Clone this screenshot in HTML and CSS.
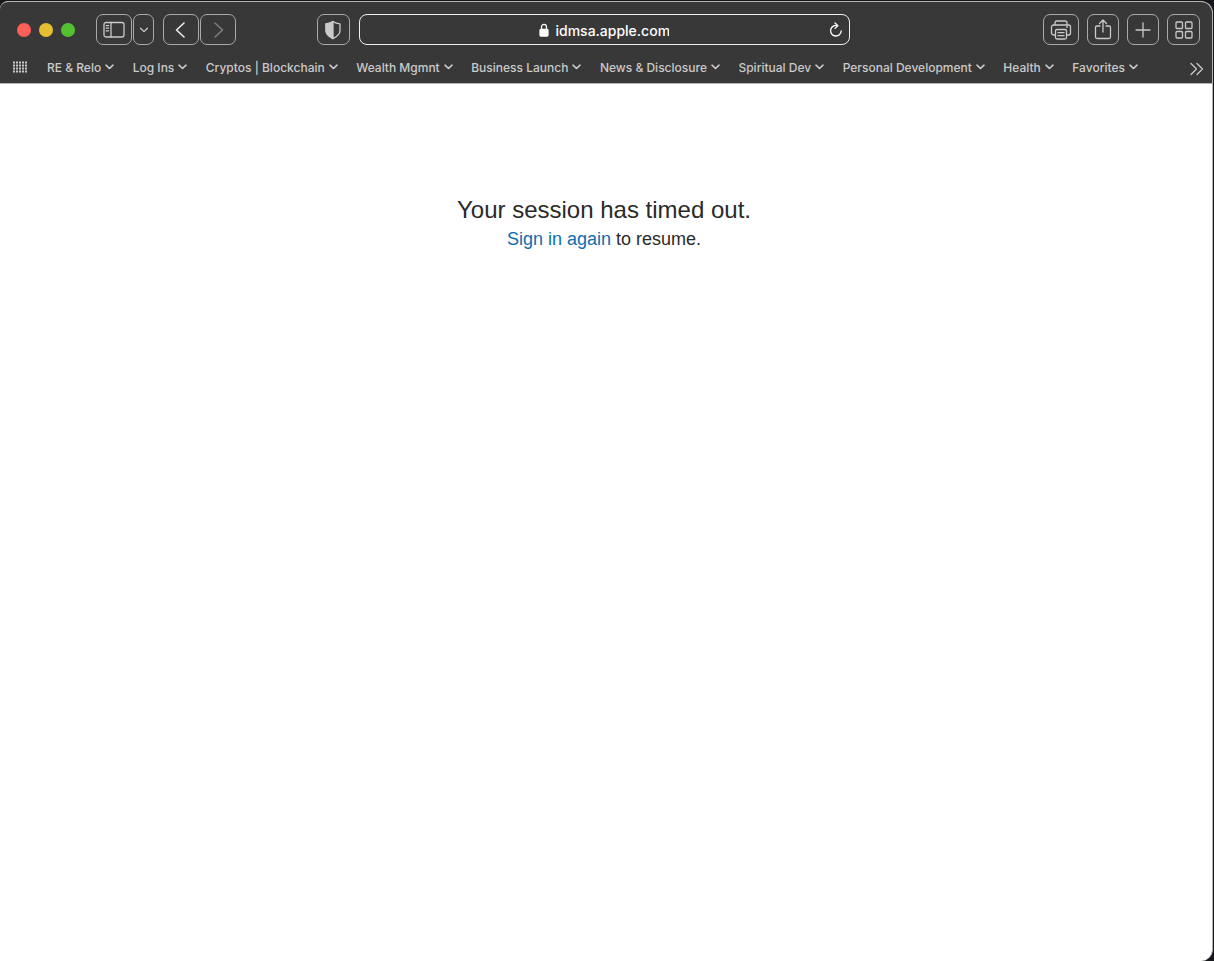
FILE: index.html
```html
<!DOCTYPE html>
<html lang="en">
<head>
  <meta charset="UTF-8">
  <meta name="viewport" content="width=device-width, initial-scale=1.0">
  <title>Session timed out</title>
  <link rel="stylesheet" href="styles.css">
</head>
<body>
  <svg class="defs" width="0" height="0" aria-hidden="true">
    <symbol id="chevron" viewBox="0 0 9 6"><path d="M1 1.200l3.500 3.300L8 1.200"/></symbol>
  </svg>

  <div class="window">
    <header class="chrome">
      <div class="toolbar">
        <div class="toolbar-left">
          <div class="lights">
            <button class="light red" aria-label="Close"></button>
            <button class="light yellow" aria-label="Minimize"></button>
            <button class="light green" aria-label="Zoom"></button>
          </div>
          <div class="pair">
            <button class="tool wide" aria-label="Show sidebar">
              <svg width="22" height="18" viewBox="0 0 22 18"><rect x="1" y="1.500" width="20" height="14.500" rx="2"/><path d="M8 1.500V16M3.200 4.600h2.400M3.200 7.200h2.400M3.200 9.800h2.400"/></svg>
            </button>
            <button class="tool slim" aria-label="Sidebar options">
              <svg width="10" height="8" viewBox="0 0 10 8"><path d="M1.500 2.200L5 5.600l3.500-3.400"/></svg>
            </button>
          </div>
          <div class="pair">
            <button class="tool wide bright" aria-label="Back">
              <svg width="12" height="18" viewBox="0 0 12 18"><path d="M9 2L1.500 9 9 16"/></svg>
            </button>
            <button class="tool wide dim" aria-label="Forward">
              <svg width="12" height="18" viewBox="0 0 12 18"><path d="M3 2l7.500 7L3 16"/></svg>
            </button>
          </div>
          <button class="tool shield" aria-label="Privacy report">
            <svg width="18" height="20" viewBox="0 0 18 20"><path d="M9 1.400c2 1.500 4.300 2.200 7 2.400v6.700c0 3.500-2.800 6-7 8.100-4.200-2.100-7-4.600-7-8.100V3.800c2.700-.2 5-.9 7-2.400z"/><path class="solid" d="M9 1.400v17.200c-4.200-2.100-7-4.600-7-8.100V3.800c2.700-.2 5-.9 7-2.400z"/></svg>
          </button>
        </div>

        <div class="address">
          <svg width="10" height="14" viewBox="0 0 10 14"><rect class="solid" x="1" y="6.500" width="8" height="6.500" rx="1"/><path d="M2.500 6.500V4a2.500 2.700 0 0 1 5 0v2.500"/></svg>
          <input type="text" value="idmsa.apple.com" aria-label="Address">
          <button class="reload" aria-label="Reload">
            <svg width="14" height="16" viewBox="0 0 14 16"><path d="M8.600 3.700A5.300 5.300 0 1 0 12.200 8.800M6 1l2.800 2.700L6 6.400"/></svg>
          </button>
        </div>

        <div class="toolbar-right">
          <button class="tool wide" aria-label="Print">
            <svg width="22" height="20" viewBox="0 0 22 20"><path d="M5 5V3a2 2 0 0 1 2-2h8a2 2 0 0 1 2 2v2M5 15H3.500A2 2 0 0 1 1.500 13V7a2 2 0 0 1 2-2h15a2 2 0 0 1 2 2v6a2 2 0 0 1-2 2H17"/><rect x="5.500" y="9.500" width="11" height="9.500" rx="1.500"/><path d="M8 12.700h6M8 15.700h6M16.500 7h1"/></svg>
          </button>
          <button class="tool" aria-label="Share">
            <svg width="18" height="22" viewBox="0 0 18 22"><path d="M6 7H3a1.500 1.500 0 0 0-1.500 1.500V18A1.500 1.500 0 0 0 3 19.500h12a1.500 1.500 0 0 0 1.500-1.500V8.500A1.500 1.500 0 0 0 15 7h-3M9 13V1M5.500 4.500L9 1l3.500 3.500"/></svg>
          </button>
          <button class="tool" aria-label="New tab">
            <svg width="16" height="16" viewBox="0 0 16 16"><path d="M8 1v14M1 8h14"/></svg>
          </button>
          <button class="tool grid" aria-label="Tab overview">
            <svg width="18" height="18" viewBox="0 0 18 18"><rect x="1" y="1" width="6.500" height="6.500" rx="1"/><rect x="10.500" y="1" width="6.500" height="6.500" rx="1"/><rect x="1" y="10.500" width="6.500" height="6.500" rx="1"/><rect x="10.500" y="10.500" width="6.500" height="6.500" rx="1"/></svg>
          </button>
        </div>
      </div>

      <nav class="bookmarks" aria-label="Favorites bar">
        <button aria-label="Show all bookmarks">
          <svg width="16" height="12" viewBox="0 0 16 12"><path class="dots" d="M1 1.500h14M1 4.500h14M1 7.500h14M1 10.500h14"/></svg>
        </button>
        <ul>
          <li><button>RE &amp; Relo <svg><use href="#chevron"/></svg></button></li>
          <li><button>Log Ins <svg><use href="#chevron"/></svg></button></li>
          <li><button>Cryptos | Blockchain <svg><use href="#chevron"/></svg></button></li>
          <li><button>Wealth Mgmnt <svg><use href="#chevron"/></svg></button></li>
          <li><button>Business Launch <svg><use href="#chevron"/></svg></button></li>
          <li><button>News &amp; Disclosure <svg><use href="#chevron"/></svg></button></li>
          <li><button>Spiritual Dev <svg><use href="#chevron"/></svg></button></li>
          <li><button>Personal Development <svg><use href="#chevron"/></svg></button></li>
          <li><button>Health <svg><use href="#chevron"/></svg></button></li>
          <li><button>Favorites <svg><use href="#chevron"/></svg></button></li>
        </ul>
        <button class="more" aria-label="More bookmarks">
          <svg width="14" height="14" viewBox="0 0 14 14"><path d="M1 1.500L6.500 7 1 12.500M7 1.500L12.500 7 7 12.500"/></svg>
        </button>
      </nav>
    </header>

    <main>
      <h1>Your session has timed out.</h1>
      <p><a href="#">Sign in again</a> to resume.</p>
    </main>
  </div>
</body>
</html>
```

FILE: styles.css
```css
* {
  box-sizing: border-box;
}

body {
  margin: 0;
  padding: 1px 1px 0 0;
  min-height: 100vh;
  display: flex;
  background: #15171a;
  font-family: Inter, "Liberation Sans", sans-serif;
}

.defs {
  position: absolute;
}

.window {
  flex: 1;
  min-width: 0;
  background: white;
  border-top: 1px solid #b5b5b5;
  border-right: 1px solid #b5b5b5;
  border-radius: 8px 12px 12px 0;
  overflow: hidden;
}

button {
  padding: 0;
  border: 0;
  background: none;
  color: inherit;
  font: inherit;
}

svg {
  display: block;
  fill: none;
  stroke: currentColor;
  stroke-width: 1.3;
  stroke-linecap: round;
  stroke-linejoin: round;
}

.solid {
  fill: currentColor;
}

.chrome {
  padding-bottom: 4px;
  border-bottom: 1px solid #b5b5b5;
  background: #383838;
  color: #cacaca;
}

.toolbar {
  display: grid;
  grid-template-columns: 100fr 144fr 100fr;
  gap: 9px;
  padding: 12px 12px 0 9px;
}

.toolbar-left,
.toolbar-right,
.lights,
.pair,
.address,
.bookmarks,
.bookmarks ul {
  display: flex;
  align-items: center;
}

.lights {
  gap: 8px;
  margin: 0 21px 0 8px;
}

.light {
  width: 14px;
  height: 14px;
  border-radius: 50%;
}

.red {
  background: #fe5f57;
}

.yellow {
  background: #e5bf2f;
}

.green {
  background: #54c22f;
}

.pair {
  gap: 1px;
  margin-right: 9px;
}

.tool {
  display: flex;
  align-items: center;
  justify-content: center;
  width: 32px;
  height: 31px;
  border: 1px solid #a9a9a9;
  border-radius: 7px;
}

.wide {
  width: 36px;
}

.slim {
  width: 21px;
}

.shield {
  width: 33px;
  margin-left: auto;
}

.grid {
  width: 33px;
}

.bright {
  color: #eeeeee;
}

.bright svg,
.dim svg {
  stroke-width: 1.6;
}

.dim svg {
  color: #7d7d7d;
}

.toolbar-right {
  justify-content: flex-end;
  gap: 8px;
}

.address {
  position: relative;
  justify-content: center;
  gap: 6px;
  height: 31px;
  border: 1px solid #f0f0f0;
  border-radius: 8px;
  color: white;
}

.address input {
  width: 114px;
  padding: 1px 0 0;
  border: 0;
  background: none;
  color: inherit;
  font: 500 14px Inter, "Liberation Sans", sans-serif;
}

.reload {
  position: absolute;
  right: 6px;
}

.bookmarks {
  padding: 10px 8px 0 12px;
  font-size: 12px;
  font-weight: 500;
}

.bookmarks ul {
  flex: 1;
  justify-content: space-between;
  margin: 0 52px 0 19px;
  padding: 0;
  list-style: none;
}

.bookmarks li button {
  display: flex;
  align-items: center;
  gap: 4px;
  height: 24px;
  white-space: nowrap;
}

.bookmarks li svg {
  width: 9px;
  height: 6px;
  stroke-width: 1.6;
}

.dots {
  stroke-width: 2;
  stroke-linecap: butt;
  stroke-dasharray: 2 1;
}

.more {
  padding-top: 4px;
}

main {
  padding: 111px 4px 0 0;
  color: #2a2a2a;
  font-family: "Liberation Sans", Arial, sans-serif;
  text-align: center;
}

h1 {
  margin: 0;
  font-size: 24px;
  font-weight: 400;
  line-height: 30px;
}

p {
  margin: 0;
  font-size: 18px;
  line-height: 28px;
}

a {
  color: #0f6cae;
  text-decoration: none;
}
```
